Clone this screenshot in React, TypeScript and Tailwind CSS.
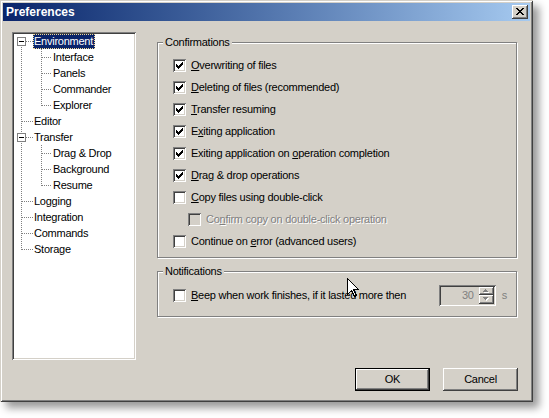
import type { ReactNode } from 'react';

// Win9x/2000 style 3D edges
const raised =
  'shadow-[inset_-1px_-1px_#404040,inset_1px_1px_#fff,inset_-2px_-2px_#808080,inset_2px_2px_#d4d0c8]';
const sunken =
  'shadow-[inset_1px_1px_#808080,inset_-1px_-1px_#fff,inset_2px_2px_#404040,inset_-2px_-2px_#d4d0c8]';

const CHECK = ['......#', '.....##', '#...###', '##.###.', '#####..', '.###...', '..#....'];
const CROSS = ['##....##', '.##..##.', '..####..', '...##...', '..####..', '.##..##.', '##....##'];
const UP = ['..#..', '.###.', '#####'];
const DOWN = ['#####', '.###.', '..#..'];

// small bitmap glyphs, one rect per pixel
function Pixels({ rows, color, shadow }: { rows: string[]; color: string; shadow?: string }) {
  const w = rows[0].length + (shadow ? 1 : 0);
  const h = rows.length + (shadow ? 1 : 0);
  const dots = (fill: string, dx: number) =>
    rows.flatMap((r, y) =>
      r.split('').map((c, x) =>
        c === '#' ? <rect key={`${fill}-${x}-${y}`} x={x + dx} y={y + dx} width={1} height={1} fill={fill} /> : null,
      ),
    );
  return (
    <svg width={w} height={h} shapeRendering="crispEdges" className="block shrink-0">
      {shadow && dots(shadow, 1)}
      {dots(color, 0)}
    </svg>
  );
}

type TreeNode = { label: string; children?: string[] };

const tree: TreeNode[] = [
  { label: 'Environment', children: ['Interface', 'Panels', 'Commander', 'Explorer'] },
  { label: 'Editor' },
  { label: 'Transfer', children: ['Drag & Drop', 'Background', 'Resume'] },
  { label: 'Logging' },
  { label: 'Integration' },
  { label: 'Commands' },
  { label: 'Storage' },
];

type Row = {
  depth: number;
  label: string;
  first: boolean;
  last: boolean;
  expander?: boolean;
  passThrough?: boolean;
  selected?: boolean;
};

const treeRows: Row[] = [];
tree.forEach((n, i) => {
  const last = i === tree.length - 1;
  treeRows.push({ depth: 0, label: n.label, first: i === 0, last, expander: !!n.children, selected: i === 0 });
  n.children?.forEach((c, j) =>
    treeRows.push({ depth: 1, label: c, first: false, last: j === n.children!.length - 1, passThrough: !last }),
  );
});

// dotted tree lines and the +/- box for one row
function Connector({ row }: { row: Row }) {
  const w = row.depth === 0 ? 19 : 38;
  const x = row.depth === 0 ? 7.5 : 27.5;
  return (
    <svg width={w} height={16} shapeRendering="crispEdges" className="block shrink-0">
      <g stroke="#808080" strokeDasharray="1 1">
        {row.passThrough && <line x1={7.5} y1={0} x2={7.5} y2={16} />}
        {row.expander ? (
          <>
            {!row.first && <line x1={x} y1={0} x2={x} y2={4} />}
            {!row.last && <line x1={x} y1={14} x2={x} y2={16} />}
            <line x1={x + 4.5} y1={8.5} x2={x + 11.5} y2={8.5} />
          </>
        ) : (
          <>
            <line x1={x} y1={row.first ? 8 : 0} x2={x} y2={row.last ? 9 : 16} />
            <line x1={x + 0.5} y1={8.5} x2={x + 11.5} y2={8.5} />
          </>
        )}
      </g>
      {row.expander && (
        <>
          <rect x={x - 4} y={4.5} width={8} height={8} fill="#fff" stroke="#808080" />
          <line x1={x - 2.5} y1={8.5} x2={x + 2.5} y2={8.5} stroke="#000" />
        </>
      )}
    </svg>
  );
}

function TreeView() {
  return (
    <div className={`w-[124px] h-[328px] bg-white pt-[1px] pl-[2px] shrink-0 ${sunken}`}>
      {treeRows.map((row, i) => (
        <div key={i} className="flex items-center h-[16px]">
          <Connector row={row} />
          <span
            className={`h-[15px] leading-[13px] border border-dotted pr-[1px] whitespace-nowrap ${
              row.selected ? 'bg-[#0a246a] text-white border-[#f5db95]' : 'border-transparent text-black'
            }`}
          >
            {row.label}
          </span>
        </div>
      ))}
    </div>
  );
}

function CheckBox({ checked, disabled }: { checked?: boolean; disabled?: boolean }) {
  return (
    <span
      className={`w-[13px] h-[13px] shrink-0 flex items-center justify-center ${sunken} ${
        disabled ? 'bg-[#d4d0c8]' : 'bg-white'
      }`}
    >
      {checked && <Pixels rows={CHECK} color="#000" />}
    </span>
  );
}

function GroupBox({ title, className, children }: { title: string; className?: string; children: ReactNode }) {
  return (
    <div
      className={`flex flex-col border border-[#808080] shadow-[inset_1px_1px_#fff,1px_1px_#fff] ${className ?? ''}`}
    >
      <span className="self-start -mt-[7px] ml-[5px] px-[2px] leading-[13px] bg-[#d4d0c8]">{title}</span>
      {children}
    </div>
  );
}

type Option = { checked?: boolean; disabled?: boolean; indent?: boolean; label: ReactNode };

const confirmations: Option[] = [
  { checked: true, label: <><u>O</u>verwriting of files</> },
  { checked: true, label: <><u>D</u>eleting of files (recommended)</> },
  { checked: true, label: <><u>T</u>ransfer resuming</> },
  { checked: true, label: <>E<u>x</u>iting application</> },
  { checked: true, label: <>Exiting application on <u>o</u>peration completion</> },
  { checked: true, label: <><u>D</u>rag &amp; drop operations</> },
  { label: <><u>C</u>opy files using double-click</> },
  { disabled: true, indent: true, label: <>Co<u>n</u>firm copy on double-click operation</> },
  { label: <>Continue on <u>e</u>rror (advanced users)</> },
];

function SpinEdit({ value }: { value: number }) {
  return (
    <div className={`w-[57px] h-[21px] bg-[#d4d0c8] flex items-center justify-end p-[2px] ${sunken}`}>
      <span className="text-[#808080] pr-[5px]">{value}</span>
      <div className="flex flex-col w-[15px] h-full">
        <div className={`h-[8px] flex justify-center pt-[2px] ${raised}`}>
          <Pixels rows={UP} color="#808080" shadow="#fff" />
        </div>
        <div className={`h-[9px] flex justify-center pt-[2px] ${raised}`}>
          <Pixels rows={DOWN} color="#808080" shadow="#fff" />
        </div>
      </div>
    </div>
  );
}

function Button({ label, isDefault }: { label: string; isDefault?: boolean }) {
  return (
    <button
      className={`w-[75px] h-[23px] bg-[#d4d0c8] text-black flex items-center justify-center ${
        isDefault ? 'border border-black' : ''
      }`}
    >
      <span className={`w-full h-full flex items-center justify-center ${raised}`}>{label}</span>
    </button>
  );
}

export default function App() {
  return (
    <div className="relative w-[549px] h-[418px] bg-white overflow-hidden font-['Liberation_Sans',Arial,sans-serif] text-[11px] tracking-[-0.25px] text-black select-none">
      <div className="w-[533px] h-[402px] bg-[#d4d0c8] flex flex-col p-[3px] shadow-[inset_1px_1px_#d4d0c8,inset_-1px_-1px_#404040,inset_2px_2px_#fff,inset_-2px_-2px_#808080,6px_6px_8px_rgba(0,0,0,0.4)]">
        {/* caption */}
        <div className="h-[18px] shrink-0 flex items-center pl-[3px] pr-[2px] bg-linear-to-r from-[#0a246a] to-[#a6caf0]">
          <span className="text-white font-bold text-[12px] tracking-normal">Preferences</span>
          <span className={`ml-auto w-[16px] h-[14px] bg-[#d4d0c8] pt-[3px] pl-[4px] ${raised}`}>
            <Pixels rows={CROSS} color="#000" />
          </span>
        </div>

        <div className="flex pt-[11px] pl-[9px]">
          <TreeView />

          <div className="w-[360px] ml-[21px] flex flex-col">
            <GroupBox title="Confirmations" className="mt-[10px]">
              <div className="flex flex-col pt-[5px] pb-[5px] pl-[15px]">
                {confirmations.map((o, i) => (
                  <div key={i} className={`flex items-center h-[22px] ${o.indent ? 'ml-[15px]' : ''}`}>
                    <CheckBox checked={o.checked} disabled={o.disabled} />
                    <span
                      className={`ml-[5px] whitespace-nowrap ${
                        o.disabled ? 'text-[#808080] [text-shadow:1px_1px_0_#fff]' : ''
                      }`}
                    >
                      {o.label}
                    </span>
                  </div>
                ))}
              </div>
            </GroupBox>

            <GroupBox title="Notifications" className="mt-[13px]">
              <div className="flex items-center h-[22px] mt-[6px] mb-[10px] pl-[15px] pr-[9px]">
                <CheckBox />
                <span className="ml-[5px] whitespace-nowrap">
                  <u>B</u>eep when work finishes, if it lasted more then
                </span>
                <span className="ml-auto">
                  <SpinEdit value={30} />
                </span>
                <span className="ml-[6px] text-[#808080]">s</span>
              </div>
            </GroupBox>
          </div>
        </div>

        <div className="flex justify-end gap-[13px] mt-[8px] pr-[12px]">
          <Button label="OK" isDefault />
          <Button label="Cancel" />
        </div>
      </div>

      {/* mouse pointer resting over the notifications box */}
      <svg
        width={13}
        height={20}
        className="absolute left-[347px] top-[278px]"
        shapeRendering="crispEdges"
      >
        <path d="M0.5 0.5 L0.5 16.5 L4.5 12.5 L7.5 18.5 L9.5 17.5 L6.5 11.5 L11.5 11.5 Z" fill="#fff" stroke="#000" />
      </svg>
    </div>
  );
}
